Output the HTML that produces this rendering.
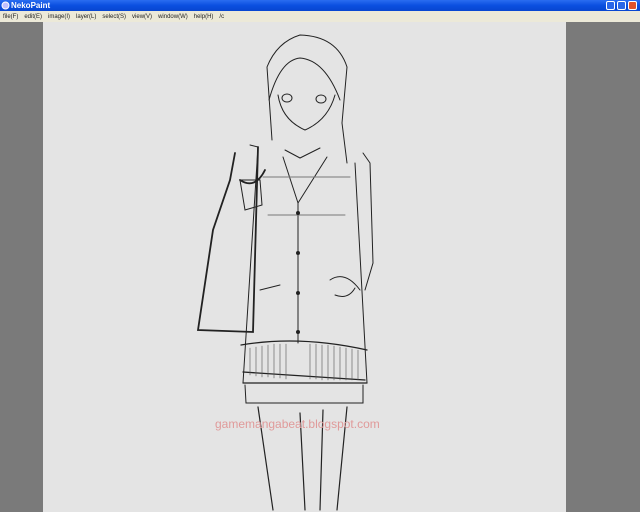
<!DOCTYPE html>
<html><head><meta charset="utf-8"><style>
*{margin:0;padding:0}
body{width:640px;height:512px;overflow:hidden;background:#7a7a7a;font-family:"Liberation Sans",sans-serif;position:relative}
#title{position:absolute;left:0;top:0;width:640px;height:11px;background:linear-gradient(#2a6df0,#0a4fe0 50%,#0846d0);}
#title span{position:absolute;left:11px;top:0;font-size:8px;font-weight:bold;color:#fff;line-height:11px}
#menu{position:absolute;left:0;top:11px;width:640px;height:11px;background:#ece9d8;font-size:6px;line-height:12px;color:#222;white-space:nowrap}
#menu span{margin-left:3px;margin-right:3px}
#canvas{position:absolute;left:43px;top:22px;width:523px;height:490px;background:#e4e4e4}
#right{position:absolute;left:566px;top:22px;width:74px;height:490px;background:#7a7a7a}
.btn{position:absolute;top:1px;width:9px;height:9px;border:1px solid #fff;border-radius:2px;background:#2a66e8;box-sizing:border-box}
#wm{position:absolute;left:215px;top:417px;font-size:12px;color:#e09a9a}
</style></head><body>
<div id="title"><svg width="9" height="9" style="position:absolute;left:1px;top:1px"><circle cx="4.5" cy="4.5" r="3.5" fill="#c0c0ff" stroke="#fff"/></svg><span>NekoPaint</span>
<div class="btn" style="left:606px"></div><div class="btn" style="left:617px"></div><div class="btn" style="left:628px;background:#e0522c"></div></div>
<div id="menu"><span>file(F)</span><span>edit(E)</span><span>image(I)</span><span>layer(L)</span><span>select(S)</span><span>view(V)</span><span>window(W)</span><span>help(H)</span><span>/c</span></div>
<div id="canvas"></div><div id="right"></div>
<svg width="640" height="512" style="position:absolute;left:0;top:0" fill="none" stroke="#222" stroke-width="1" stroke-linecap="round">
<path d="M272 140 L267 67 Q277 42 300 35 Q337 36 347 67 L342 123 L347 163"/>
<path d="M269 100 Q280 60 300 58 Q325 60 340 100"/>
<path d="M278 95 Q282 120 305 130 Q328 120 335 95"/>
<ellipse cx="287" cy="98" rx="5" ry="4"/><ellipse cx="321" cy="99" rx="5" ry="4"/>
<path d="M250 145 L258 147 L243 383 M363 153 L370 163 L373 263 L365 290 M355 163 L367 383"/>
<path d="M243 383 L367 383 M241 345 Q300 335 367 350 M243 372 L365 380" stroke-width="1.3"/>
<path d="M250 348 L250 375 M256 347 L256 376 M262 346 L262 377 M268 345 L268 377 M274 344 L274 378 M280 344 L280 378 M286 344 L286 379 M310 344 L310 379 M316 344 L316 379 M322 345 L322 380 M328 345 L328 380 M334 346 L334 380 M340 347 L340 380 M346 348 L346 380 M352 349 L352 380 M358 350 L358 380" stroke="#555" stroke-width="0.6"/>
<path d="M245 385 L246 403 L363 403 L363 385"/>
<path d="M258 407 L273 510 M300 413 L305 510 M323 410 L320 510 M347 407 L337 510" stroke-width="1.2"/>
<path d="M235 153 L230 180 L213 230 L198 330 L253 332 L258 147 M240 180 Q255 190 265 170" stroke-width="1.8"/>
<path d="M240 180 L245 210 L262 205 L260 180 Z"/>
<path d="M283 157 L298 203 L327 157 M298 203 L298 343 M285 150 L300 158 L320 148"/>
<path d="M263 177 L350 177 M268 215 L345 215" stroke="#777"/>
<path d="M260 290 L280 285 M330 280 Q345 270 360 290 M335 295 Q348 300 355 288"/>
<g fill="#222"><circle cx="298" cy="213" r="1.5"/><circle cx="298" cy="253" r="1.5"/><circle cx="298" cy="293" r="1.5"/><circle cx="298" cy="332" r="1.5"/></g>
</svg>
<div id="wm">gamemangabeat.blogspot.com</div>
</body></html>
